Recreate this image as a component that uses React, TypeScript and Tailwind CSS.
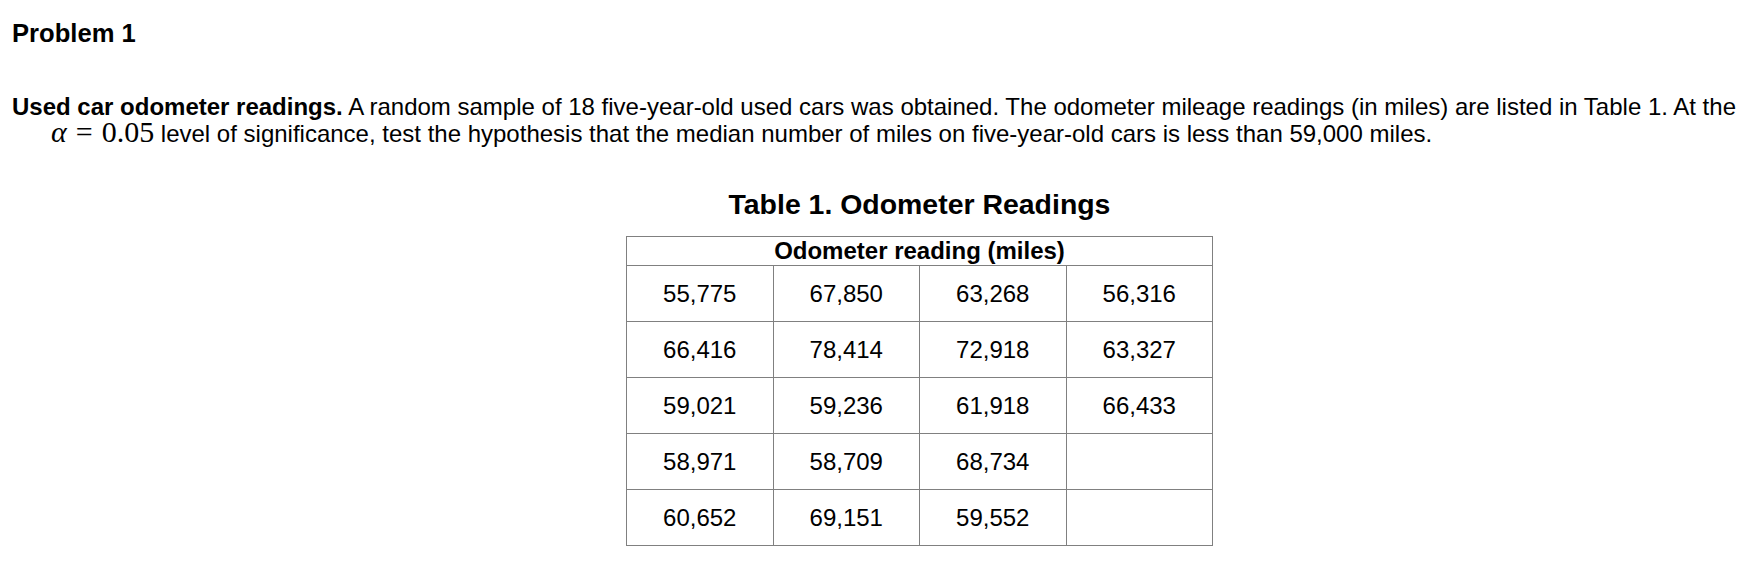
import React from 'react';

const rows: string[][] = [
  ['55,775', '67,850', '63,268', '56,316'],
  ['66,416', '78,414', '72,918', '63,327'],
  ['59,021', '59,236', '61,918', '66,433'],
  ['58,971', '58,709', '68,734', ''],
  ['60,652', '69,151', '59,552', ''],
];

function OdometerTable() {
  return (
    <div className="ml-[614px] w-[587px]">
      <div className="text-center text-[28.44px] font-bold leading-[34px] mb-[15px]">
        Table 1. Odometer Readings
      </div>
      <table className="w-[587px] table-fixed border-collapse">
        <thead>
          <tr>
            <th
              colSpan={4}
              className="border border-[#808080] h-[29px] p-0 text-[24px] font-bold leading-[28px] text-center"
            >
              Odometer reading (miles)
            </th>
          </tr>
        </thead>
        <tbody>
          {rows.map((row, i) => (
            <tr key={i}>
              {row.map((val, j) => (
                <td
                  key={j}
                  className="border border-[#808080] h-[56px] p-0 text-[24px] leading-[28px] text-center"
                >
                  {val}
                </td>
              ))}
            </tr>
          ))}
        </tbody>
      </table>
    </div>
  );
}

export default function App() {
  return (
    <div className="w-[1751px] h-[569px] bg-white text-black font-['Liberation_Sans',Arial,sans-serif] pl-[12px] pt-[18px]">
      <h2 className="text-[25.6px] font-bold leading-[30px]">Problem 1</h2>

      <p className="mt-[45px] text-[24px] leading-[27px] pl-[39px] -indent-[39px] whitespace-nowrap">
        <span className="font-bold">Used car odometer readings.</span> A random sample of 18
        five-year-old used cars was obtained. The odometer mileage readings (in miles) are listed
        in Table 1. At the
        <br />
        <span className="font-['Liberation_Serif',serif] text-[30px] leading-[20px]">
          <span className="italic">α</span>
          <span className="mx-[9px]">=</span>
          <span>0.05</span>
        </span>{' '}
        level of significance, test the hypothesis that the median number of miles on
        five-year-old cars is less than 59,000 miles.
      </p>

      <div className="mt-[40px]">
        <OdometerTable />
      </div>
    </div>
  );
}
